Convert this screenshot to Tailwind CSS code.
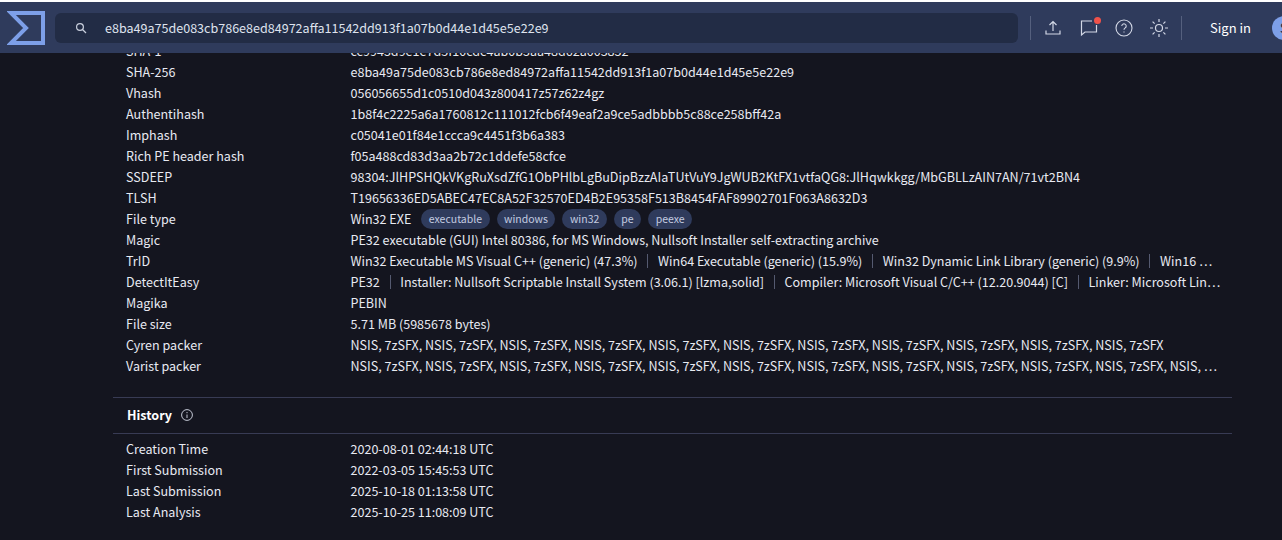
<!DOCTYPE html>
<html lang="en">
<head>
  <meta charset="UTF-8" />
  <title>VirusTotal - File details</title>
  <script src="https://cdn.jsdelivr.net/npm/@tailwindcss/browser@4"></script>
</head>
<body class="h-screen overflow-hidden bg-[#14151f] text-[#e8eaf2] font-['Noto_Sans_CJK_SC','Noto_Sans',sans-serif] text-[12.55px] leading-[21px]">
  <!-- Top bar -->
  <header class="h-[53px] border-t-2 border-white bg-[#2f3b5c] flex items-center relative z-10 whitespace-nowrap">
    <svg class="w-[38px] h-[34px] ml-[7px] shrink-0" viewBox="0 0 38 34" fill="none" stroke="#7d9fe8" stroke-width="4">
      <path d="M38 2H4l15 15L4 32h34M36 0v34" />
    </svg>
    <div class="w-[963px] h-[30px] ml-[10px] shrink-0 rounded-md bg-[#222c45] flex items-center text-[#dfe3ee]">
      <svg class="w-[12px] h-[12px] ml-[20px]" viewBox="0 0 12 12" fill="none" stroke="#c9cfdd" stroke-width="1.2"><circle cx="5" cy="5" r="3.4"/><path d="M7.5 7.5l3.5 3.5"/></svg>
      <span class="ml-[18px]">e8ba49a75de083cb786e8ed84972affa11542dd913f1a07b0d44e1d45e5e22e9</span>
    </div>
    <div class="w-px h-6 bg-[#55607e] ml-[12px] shrink-0"></div>
    <svg class="w-[18px] h-[18px] ml-[13px] shrink-0" viewBox="0 0 18 18" fill="none" stroke="#d3d8e6" stroke-width="1.2"><path d="M9 12V2.5M5.5 6L9 2.5 12.5 6M2 11.500V15h14v-3.500"/></svg>
    <div class="relative ml-[18px] w-[18px] h-[18px] shrink-0">
      <svg class="w-[18px] h-[18px]" viewBox="0 0 18 18" fill="none" stroke="#d3d8e6" stroke-width="1.2"><path d="M12 2H1.500v14L5 13h11.500V6"/></svg>
      <div class="absolute -top-[2px] -right-[3px] w-[7px] h-[7px] rounded-full bg-[#f0524a]"></div>
    </div>
    <svg class="w-[18px] h-[18px] ml-[17px] shrink-0" viewBox="0 0 18 18" fill="none" stroke="#d3d8e6" stroke-width="1.1"><circle cx="9" cy="9" r="8"/><path d="M6.800 7a2.200 2.200 0 1 1 3.400 1.900c-.8.5-1.200 1-1.200 1.800M9 12.500v1"/></svg>
    <svg class="w-[20px] h-[20px] ml-[16px] shrink-0" viewBox="0 0 20 20" fill="none" stroke="#d3d8e6" stroke-width="1.2"><circle cx="10" cy="10" r="3.500"/><path d="M10 1v3M10 16v3M1 10h3M16 10h3M3.600 3.600l2 2M14.400 14.400l2 2M3.600 16.400l2-2M14.400 5.600l2-2"/></svg>
    <div class="w-px h-6 bg-[#55607e] ml-[12px] shrink-0"></div>
    <span class="ml-[28px] text-white text-[13px]">Sign in</span>
    <div class="ml-[21px] w-[24px] h-[24px] shrink-0 rounded-full bg-[#7d9fe8] text-[#1a2238] pl-2 leading-[24px]">S</div>
  </header>

  <main class="h-[487px] overflow-hidden whitespace-nowrap">
    <div class="-mt-[13px] ml-[113px] w-[1119px]">
      <dl class="pl-[13px]">
        <div class="flex"><dt class="w-[224.5px] shrink-0">SHA-1</dt><dd>cc9943d9e1e7d5f10cdc4ab0b3aa48d62a003832</dd></div>
        <div class="flex"><dt class="w-[224.5px] shrink-0">SHA-256</dt><dd>e8ba49a75de083cb786e8ed84972affa11542dd913f1a07b0d44e1d45e5e22e9</dd></div>
        <div class="flex"><dt class="w-[224.5px] shrink-0">Vhash</dt><dd>056056655d1c0510d043z800417z57z62z4gz</dd></div>
        <div class="flex"><dt class="w-[224.5px] shrink-0">Authentihash</dt><dd>1b8f4c2225a6a1760812c111012fcb6f49eaf2a9ce5adbbbb5c88ce258bff42a</dd></div>
        <div class="flex"><dt class="w-[224.5px] shrink-0">Imphash</dt><dd>c05041e01f84e1ccca9c4451f3b6a383</dd></div>
        <div class="flex"><dt class="w-[224.5px] shrink-0">Rich PE header hash</dt><dd>f05a488cd83d3aa2b72c1ddefe58cfce</dd></div>
        <div class="flex"><dt class="w-[224.5px] shrink-0">SSDEEP</dt><dd>98304:JlHPSHQkVKgRuXsdZfG1ObPHlbLgBuDipBzzAIaTUtVuY9JgWUB2KtFX1vtfaQG8:JlHqwkkgg/MbGBLLzAIN7AN/71vt2BN4</dd></div>
        <div class="flex"><dt class="w-[224.5px] shrink-0">TLSH</dt><dd>T19656336ED5ABEC47EC8A52F32570ED4B2E95358F513B8454FAF89902701F063A8632D3</dd></div>
        <div class="flex"><dt class="w-[224.5px] shrink-0">File type</dt>
          <dd class="flex items-center">Win32 EXE
            <span class="ml-[10px] mt-[1px] flex gap-[7px] text-[10.5px] text-[#c3cbe0]">
              <span class="px-[7.5px] h-[20px] leading-[20px] rounded-full bg-[#2f3b5c]">executable</span>
              <span class="px-[7.5px] h-[20px] leading-[20px] rounded-full bg-[#2f3b5c]">windows</span>
              <span class="px-[7.5px] h-[20px] leading-[20px] rounded-full bg-[#2f3b5c]">win32</span>
              <span class="px-[7.5px] h-[20px] leading-[20px] rounded-full bg-[#2f3b5c]">pe</span>
              <span class="px-[7.5px] h-[20px] leading-[20px] rounded-full bg-[#2f3b5c]">peexe</span>
            </span>
          </dd>
        </div>
        <div class="flex"><dt class="w-[224.5px] shrink-0">Magic</dt><dd>PE32 executable (GUI) Intel 80386, for MS Windows, Nullsoft Installer self-extracting archive</dd></div>
        <div class="flex"><dt class="w-[224.5px] shrink-0">TrID</dt>
          <dd class="flex items-center">
            <span>Win32 Executable MS Visual C++ (generic) (47.3%)</span><i class="w-px h-[14px] bg-[#555a70] mx-[9.75px]"></i>
            <span>Win64 Executable (generic) (15.9%)</span><i class="w-px h-[14px] bg-[#555a70] mx-[9.75px]"></i>
            <span>Win32 Dynamic Link Library (generic) (9.9%)</span><i class="w-px h-[14px] bg-[#555a70] mx-[9.75px]"></i>
            <span>Win16 …</span>
          </dd>
        </div>
        <div class="flex"><dt class="w-[224.5px] shrink-0">DetectItEasy</dt>
          <dd class="flex items-center">
            <span>PE32</span><i class="w-px h-[14px] bg-[#555a70] mx-[9.75px]"></i>
            <span>Installer: Nullsoft Scriptable Install System (3.06.1) [lzma,solid]</span><i class="w-px h-[14px] bg-[#555a70] mx-[9.75px]"></i>
            <span>Compiler: Microsoft Visual C/C++ (12.20.9044) [C]</span><i class="w-px h-[14px] bg-[#555a70] mx-[9.75px]"></i>
            <span>Linker: Microsoft Lin…</span>
          </dd>
        </div>
        <div class="flex"><dt class="w-[224.5px] shrink-0">Magika</dt><dd>PEBIN</dd></div>
        <div class="flex"><dt class="w-[224.5px] shrink-0">File size</dt><dd>5.71 MB (5985678 bytes)</dd></div>
        <div class="flex"><dt class="w-[224.5px] shrink-0">Cyren packer</dt><dd>NSIS, 7zSFX, NSIS, 7zSFX, NSIS, 7zSFX, NSIS, 7zSFX, NSIS, 7zSFX, NSIS, 7zSFX, NSIS, 7zSFX, NSIS, 7zSFX, NSIS, 7zSFX, NSIS, 7zSFX, NSIS, 7zSFX</dd></div>
        <div class="flex"><dt class="w-[224.5px] shrink-0">Varist packer</dt><dd>NSIS, 7zSFX, NSIS, 7zSFX, NSIS, 7zSFX, NSIS, 7zSFX, NSIS, 7zSFX, NSIS, 7zSFX, NSIS, 7zSFX, NSIS, 7zSFX, NSIS, 7zSFX, NSIS, 7zSFX, NSIS, 7zSFX, NSIS, …</dd></div>
      </dl>

      <div class="mt-[21px] h-[37px] border-y border-[#383b54] flex items-center pl-[14px] pb-[2px]">
        <span class="font-bold text-white">History</span>
        <svg class="w-[12px] h-[12px] ml-[9px]" viewBox="0 0 12 12" fill="none" stroke="#c3c7d4"><circle cx="6" cy="6" r="5.400"/><path d="M6 5.500V9M6 3v1.200"/></svg>
      </div>

      <dl class="pl-[13px] pt-[4px]">
        <div class="flex"><dt class="w-[224.5px] shrink-0">Creation Time</dt><dd>2020-08-01 02:44:18 UTC</dd></div>
        <div class="flex"><dt class="w-[224.5px] shrink-0">First Submission</dt><dd>2022-03-05 15:45:53 UTC</dd></div>
        <div class="flex"><dt class="w-[224.5px] shrink-0">Last Submission</dt><dd>2025-10-18 01:13:58 UTC</dd></div>
        <div class="flex"><dt class="w-[224.5px] shrink-0">Last Analysis</dt><dd>2025-10-25 11:08:09 UTC</dd></div>
      </dl>
    </div>
  </main>
</body>
</html>
